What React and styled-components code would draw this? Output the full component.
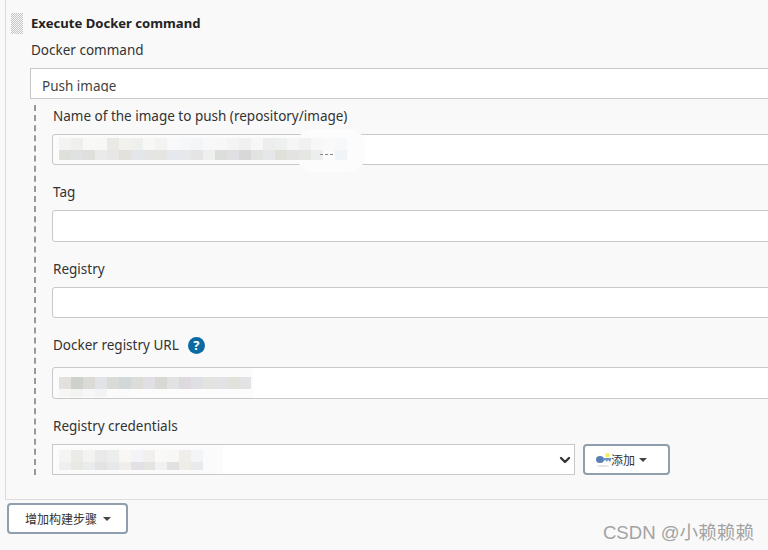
import React from "react"
import styled, { createGlobalStyle } from "styled-components"
import { ChevronDown } from "lucide-react"

const GlobalStyle = createGlobalStyle`
    html, body {
        margin: 0;
        padding: 0;
        width: 768px;
        height: 550px;
        overflow: hidden;
        background: #f9f9f9;
    }

    * {
        box-sizing: border-box;
    }
`

const nameCells = [
    ["#f3f3f1", "#efefec", "#f8f8f7", "#f7f7f6", "#e9e9e6", "#f2f1ee", "#eef0ee", "#f7f7f6", "#f3f3f2", "#f9f9f9", "#f6f7f8", "#f4f5f6", "#f8f8f8", "#f7f7f7", "#f3f4f3", "#eff0ef", "#f7f7f7", "#ecedec", "#eef0f0", "#f4f5f4", "#f0f1f0", "#f7f7f7", "#f9f9f9", "#f6f8f9"],
    ["#dfdfdb", "#dfe1e2", "#dfe0de", "#eaeaea", "#e7e8e5", "#e2e1dc", "#e3e7e9", "#e4e5e4", "#e6e5e1", "#e5e8ec", "#e7e8ea", "#e4e5e4", "#eef0ee", "#dddddb", "#e0e0e2", "#d8d8d8", "#e2e2e0", "#e5e7e8", "#e0e0da", "#e3e3e2", "#e6e6e3", "#eceded", "#fbfbfb", "#f0f3f7"],
]
const urlCells = [
    ["#e2e1de", "#cfd1cd", "#dbdad6", "#e2e3e6", "#d9dbd7", "#d2d8d8", "#dcdcd8", "#e1dfe4", "#d8d9d5", "#e1e2e2", "#ddd9df", "#dfe0e3", "#e3e3df", "#e2e3e5", "#e2e2dd", "#e3e3e6"],
    ["#f6f6f5", "#f3f3f2", "#f7f7f7", "#f3f3f4", "#fbfbfb", "#fbfbfb", "#fcfcfc", "#fcfcfc", "#fcfcfc", "#fcfcfc", "#fcfcfc", "#fcfcfc", "#fcfcfc", "#fcfcfc", "#fcfcfc", "#fcfcfc"],
]
const credentialCells = [
    ["#f4f4f3", "#ecebe8", "#f3f3f2", "#e9e9eb", "#eceeec", "#f8f7f4", "#f3f4f7", "#f1f0ee", "#f9f9f8", "#f7f7f6", "#efeeea", "#f3f4f5"],
    ["#efefef", "#e9e9e4", "#e9ebec", "#e3e3e3", "#e6e9ea", "#efeeea", "#e3e0e6", "#e6e4e0", "#eff1f3", "#e2e1e1", "#eeede7", "#e8eaec"],
]

const Mosaic = ({ cells, height }) => {
    return (
        <MosaicGrid $height={height}>
            {cells.map((row, i) => (
                <MosaicRow key={i}>
                    {row.map((color, j) => (
                        <span key={j} style={{ background: color }} />
                    ))}
                </MosaicRow>
            ))}
        </MosaicGrid>
    )
}

const KeyIcon = () => {
    return (
        <svg width="16" height="14" viewBox="0 0 16 14">
            <ellipse cx="7" cy="13" rx="6" ry="1" fill="#e4e4e4" />
            <circle cx="11.5" cy="2.2" r="2.2" fill="#f2ef5a" />
            <ellipse cx="4" cy="6.5" rx="4" ry="3.6" fill="#5a7fb5" />
            <rect x="7" y="5" width="8" height="2.4" fill="#6f93c4" />
            <rect x="10" y="7" width="1.5" height="1.5" fill="#6f93c4" />
            <rect x="13" y="7" width="1.5" height="1.5" fill="#6f93c4" />
        </svg>
    )
}

const App = () => {
    return (
        <Page>
            <GlobalStyle />
            <Panel>
                <Handle />
                <Body>
                    <Title>Execute Docker command</Title>
                    <CommandLabel>Docker command</CommandLabel>
                    <CommandSelect>
                        <CommandValue>Push image</CommandValue>
                    </CommandSelect>
                    <Dropdown>
                        <Field>
                            <Label>Name of the image to push (repository/image)</Label>
                            <InputBox $height={31} $padTop={3} $smear={280}>
                                <Blob />
                                <Mosaic cells={nameCells} height={22} />
                                <Speck />
                            </InputBox>
                        </Field>
                        <Field>
                            <Label>Tag</Label>
                            <InputBox $height={32} />
                        </Field>
                        <Field>
                            <Label>Registry</Label>
                            <InputBox $height={31} />
                        </Field>
                        <Field $gap={12}>
                            <Label>
                                Docker registry URL
                                <HelpBadge>?</HelpBadge>
                            </Label>
                            <InputBox $height={32} $padTop={9} $smear={200}>
                                <Mosaic cells={urlCells} height={20} />
                            </InputBox>
                        </Field>
                        <Field>
                            <Label>Registry credentials</Label>
                            <CredentialRow>
                                <CredentialSelect>
                                    <Mosaic cells={credentialCells} height={20} />
                                    <ChevronDown size={16} strokeWidth={3.5} color="#333" />
                                </CredentialSelect>
                                <AddButton>
                                    <KeyIcon />
                                    添加
                                    <Caret />
                                </AddButton>
                            </CredentialRow>
                        </Field>
                    </Dropdown>
                </Body>
            </Panel>
            <BuildButton>
                增加构建步骤
                <Caret />
            </BuildButton>
            <Watermark>CSDN @小赖赖赖</Watermark>
        </Page>
    )
}

const Page = styled.div`
    position: relative;
    width: 768px;
    height: 550px;
    overflow: hidden;
    padding-left: 5px;
    background: #f9f9f9;
    color: #333;
    font-family: "Noto Sans", "Noto Sans CJK SC", sans-serif;
    font-size: 13.5px;
`

const Panel = styled.section`
    display: flex;
    gap: 8px;
    width: 800px;
    height: 500px;
    padding: 13px 0 0 5px;
    border-left: 1px solid #dcdcdc;
    border-bottom: 1px solid #dcdcdc;
`

const Handle = styled.div`
    flex: none;
    width: 12px;
    height: 21px;
    background-image: repeating-conic-gradient(#c4c4c4 0 25%, transparent 0 50%);
    background-size: 2px 2px;
`

const Body = styled.div`
    flex: 1;
    padding-top: 1px;
`

const Title = styled.h2`
    margin: 0;
    height: 19px;
    font-size: 13.1px;
    font-weight: 700;
    line-height: 19px;
    color: #222;
`

const CommandLabel = styled.div`
    margin-top: 8px;
    height: 19px;
    line-height: 19px;
`

const CommandSelect = styled.div`
    margin: 8px 0 0 -1px;
    width: 780px;
    height: 31px;
    padding: 8px 0 0 11px;
    background: #fff;
    border: 1px solid #c8c8c8;
    color: #444;
`

const CommandValue = styled.div`
    height: 15px;
    overflow: hidden;
    line-height: 19px;
`

const Dropdown = styled.div`
    display: flex;
    flex-direction: column;
    gap: 18px;
    margin: 6px 0 0 3px;
    width: 760px;
    height: 370px;
    padding: 2px 0 0 16px;
    border-left: 2px dashed #999;
`

const Field = styled.div`
    display: flex;
    flex-direction: column;
    gap: ${(props) => props.$gap || 8}px;
`

const Label = styled.label`
    display: flex;
    align-items: center;
    height: 19px;
    padding-left: 1px;
    line-height: 19px;
    white-space: nowrap;
`

const InputBox = styled.div`
    position: relative;
    width: 740px;
    height: ${(props) => props.$height}px;
    padding: ${(props) => props.$padTop || 0}px 0 0 6px;
    background: ${(props) => props.$smear
        ? `linear-gradient(90deg, #fbfbfb ${props.$smear}px, #fff ${props.$smear}px)`
        : "#fff"};
    border: 1px solid #c8c8c8;
    border-radius: 3px 0 0 3px;
`

const Blob = styled.div`
    position: absolute;
    top: -6px;
    left: 243px;
    width: 70px;
    height: 43px;
    background: #fcfcfc;
    border-radius: 18px;
`

const Speck = styled.div`
    position: absolute;
    top: 19px;
    left: 267px;
    width: 14px;
    height: 1px;
    background: repeating-linear-gradient(90deg, #888 0 3px, transparent 3px 5px);
`

const MosaicGrid = styled.div`
    position: relative;
    height: ${(props) => props.$height}px;
    overflow: hidden;
`

const MosaicRow = styled.div`
    display: flex;
    height: 12px;

    span {
        width: 12px;
    }
`

const HelpBadge = styled.span`
    display: inline-flex;
    align-items: center;
    justify-content: center;
    margin-left: 9px;
    width: 17px;
    height: 17px;
    border-radius: 50%;
    background: #0b6aa2;
    color: #fff;
    font-size: 13px;
    font-weight: 700;
`

const CredentialRow = styled.div`
    display: flex;
    gap: 8px;
`

const CredentialSelect = styled.div`
    display: flex;
    align-items: center;
    justify-content: space-between;
    width: 523px;
    height: 31px;
    padding: 0 1px 0 6px;
    background: linear-gradient(90deg, #fbfbfb 170px, #fff 170px);
    border: 1px solid #c8c8c8;
`

const AddButton = styled.button`
    display: flex;
    align-items: center;
    width: 87px;
    height: 31px;
    padding: 0 0 0 11px;
    background: #fff;
    border: 2px solid #8f9fad;
    border-radius: 4px;
    color: #333;
    font: inherit;
    font-size: 12px;

    svg {
        margin-right: -1px;
    }

    i {
        margin-left: 4px;
    }
`

const Caret = styled.i`
    margin-left: 6px;
    width: 0;
    height: 0;
    border-top: 4px solid #444;
    border-left: 4px solid transparent;
    border-right: 4px solid transparent;
`

const BuildButton = styled.button`
    display: flex;
    align-items: center;
    margin: 3px 0 0 2px;
    width: 121px;
    height: 31px;
    padding: 0 0 0 16px;
    background: #fff;
    border: 2px solid #8f9fad;
    border-radius: 4px;
    color: #333;
    font: inherit;
    font-size: 12px;
`

const Watermark = styled.div`
    position: absolute;
    right: 14px;
    bottom: 6px;
    font-family: "Liberation Sans", "Noto Sans CJK SC", sans-serif;
    font-size: 18.6px;
    color: #a3a3a3;
    white-space: nowrap;
`

export default App
